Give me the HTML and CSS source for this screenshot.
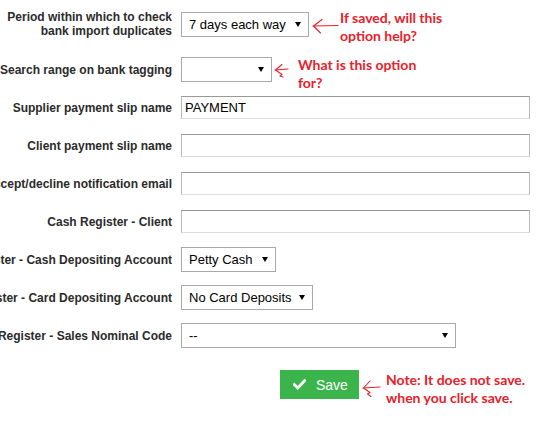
FILE: index.html
```html
<!DOCTYPE html>
<html>
<head>
<meta charset="utf-8">
<link rel="stylesheet" href="styles.css">
</head>
<body>
<div class="page">
  <form class="form">
    <div class="row row-first">
      <div class="label"><span>Period within which to check<br>bank import duplicates</span></div>
      <div class="select w-period"><span>7 days each way</span><i class="caret"></i></div>
    </div>
    <div class="row">
      <div class="label"><span>Search range on bank tagging</span></div>
      <div class="select w-range"><span></span><i class="caret"></i></div>
    </div>
    <div class="row">
      <div class="label"><span>Supplier payment slip name</span></div>
      <input class="input" type="text" value="PAYMENT">
    </div>
    <div class="row">
      <div class="label"><span>Client payment slip name</span></div>
      <input class="input" type="text" value="">
    </div>
    <div class="row">
      <div class="label"><span>Accept/decline notification email</span></div>
      <input class="input" type="text" value="">
    </div>
    <div class="row">
      <div class="label"><span>Cash Register - Client</span></div>
      <input class="input" type="text" value="">
    </div>
    <div class="row">
      <div class="label"><span>Cash Register - Cash Depositing Account</span></div>
      <div class="select w-petty"><span>Petty Cash</span><i class="caret"></i></div>
    </div>
    <div class="row">
      <div class="label"><span>Cash Register - Card Depositing Account</span></div>
      <div class="select w-card"><span>No Card Deposits</span><i class="caret"></i></div>
    </div>
    <div class="row">
      <div class="label"><span>Cash Register - Sales Nominal Code</span></div>
      <div class="select w-code"><span>--</span><i class="caret"></i></div>
    </div>
    <div class="actions">
      <button type="button" class="btn-save">
        <svg class="check" width="13" height="11" viewBox="0 0 13 11"><path d="M1.3 5.6 L4.8 9 L11.7 1.6" fill="none" stroke="#fff" stroke-width="2.8" stroke-linecap="square"/></svg>
        <span>Save</span>
      </button>
    </div>
  </form>

  <div class="note note-1">If saved, will this<br>option help?</div>
  <div class="note note-2">What is this option<br>for?</div>
  <div class="note note-3">Note: It does not save.<br>when you click save.</div>

  <svg class="arrows" width="556" height="426" viewBox="0 0 556 426">
    <g fill="none" stroke="#e8202a" stroke-width="1.1" stroke-linecap="round" stroke-linejoin="round">
      <path d="M313 26 L338 25.5"/>
      <path d="M322 19.5 L313.5 26 L320.5 33"/>
      <path d="M275 70 L288 69"/>
      <path d="M282 64.5 L275.5 70 L282 74.5 L280 76 L283 77"/>
      <path d="M363 388 L380 387"/>
      <path d="M370 381 L363.5 388 L370 392.5 L367.5 394 L371 396.5"/>
    </g>
  </svg>
</div>
</body>
</html>
```
FILE: styles.css
```css
body {
  margin: 0;
  background: #fff;
  font-family: "Liberation Sans", Arial, sans-serif;
}

.page {
  position: relative;
  width: 556px;
  height: 426px;
  overflow: hidden;
}

.form {
  display: flex;
  flex-direction: column;
  gap: 13px;
  padding-top: 10px;
  margin: 0;
}

.row {
  display: flex;
  align-items: center;
  gap: 9px;
  min-height: 25px;
}

.row-first {
  margin-bottom: 6px;
}

.label {
  width: 172px;
  flex: none;
  display: flex;
  justify-content: flex-end;
  font-weight: bold;
  font-size: 12px;
  line-height: 14px;
  color: #2b2b2b;
  text-align: right;
  white-space: nowrap;
}

.select {
  box-sizing: border-box;
  height: 25px;
  flex: none;
  display: flex;
  align-items: center;
  justify-content: space-between;
  padding: 0 7px;
  border: 1px solid #a9a9a9;
  background: #fff;
  font-size: 13px;
  color: #000;
  white-space: nowrap;
}

.caret {
  width: 0;
  height: 0;
  border-left: 3px solid transparent;
  border-right: 3px solid transparent;
  border-top: 5px solid #000;
}

.w-period { width: 128px; }
.w-range { width: 91px; }
.w-petty { width: 95px; }
.w-card { width: 132px; }
.w-code { width: 275px; }

.input {
  box-sizing: border-box;
  width: 349px;
  height: 23px;
  flex: none;
  margin: 0;
  padding: 0 3px;
  border: 1px solid;
  border-color: #999 #b8b8b8 #dcdcdc #b8b8b8;
  font-family: "Liberation Sans", Arial, sans-serif;
  font-size: 13px;
  color: #000;
  outline: none;
}

.actions {
  margin-top: 9px;
  padding-left: 280px;
}

.btn-save {
  box-sizing: border-box;
  height: 29px;
  width: 79px;
  display: inline-flex;
  align-items: center;
  gap: 10px;
  padding: 0 0 0 13px;
  border: none;
  border-radius: 0;
  background: #3bb54b;
  color: #fff;
  font-family: "Liberation Sans", Arial, sans-serif;
  font-size: 14px;
}

.check {
  display: block;
}

.note {
  position: absolute;
  color: #e8202a;
  font-family: Lato, "Liberation Sans", sans-serif;
  font-weight: bold;
  font-size: 14px;
  line-height: 18px;
  white-space: nowrap;
}

.note-1 { left: 340px; top: 9px; }
.note-2 { left: 298px; top: 56px; }
.note-3 { left: 386px; top: 371px; }

.arrows {
  position: absolute;
  left: 0;
  top: 0;
  pointer-events: none;
}
```
